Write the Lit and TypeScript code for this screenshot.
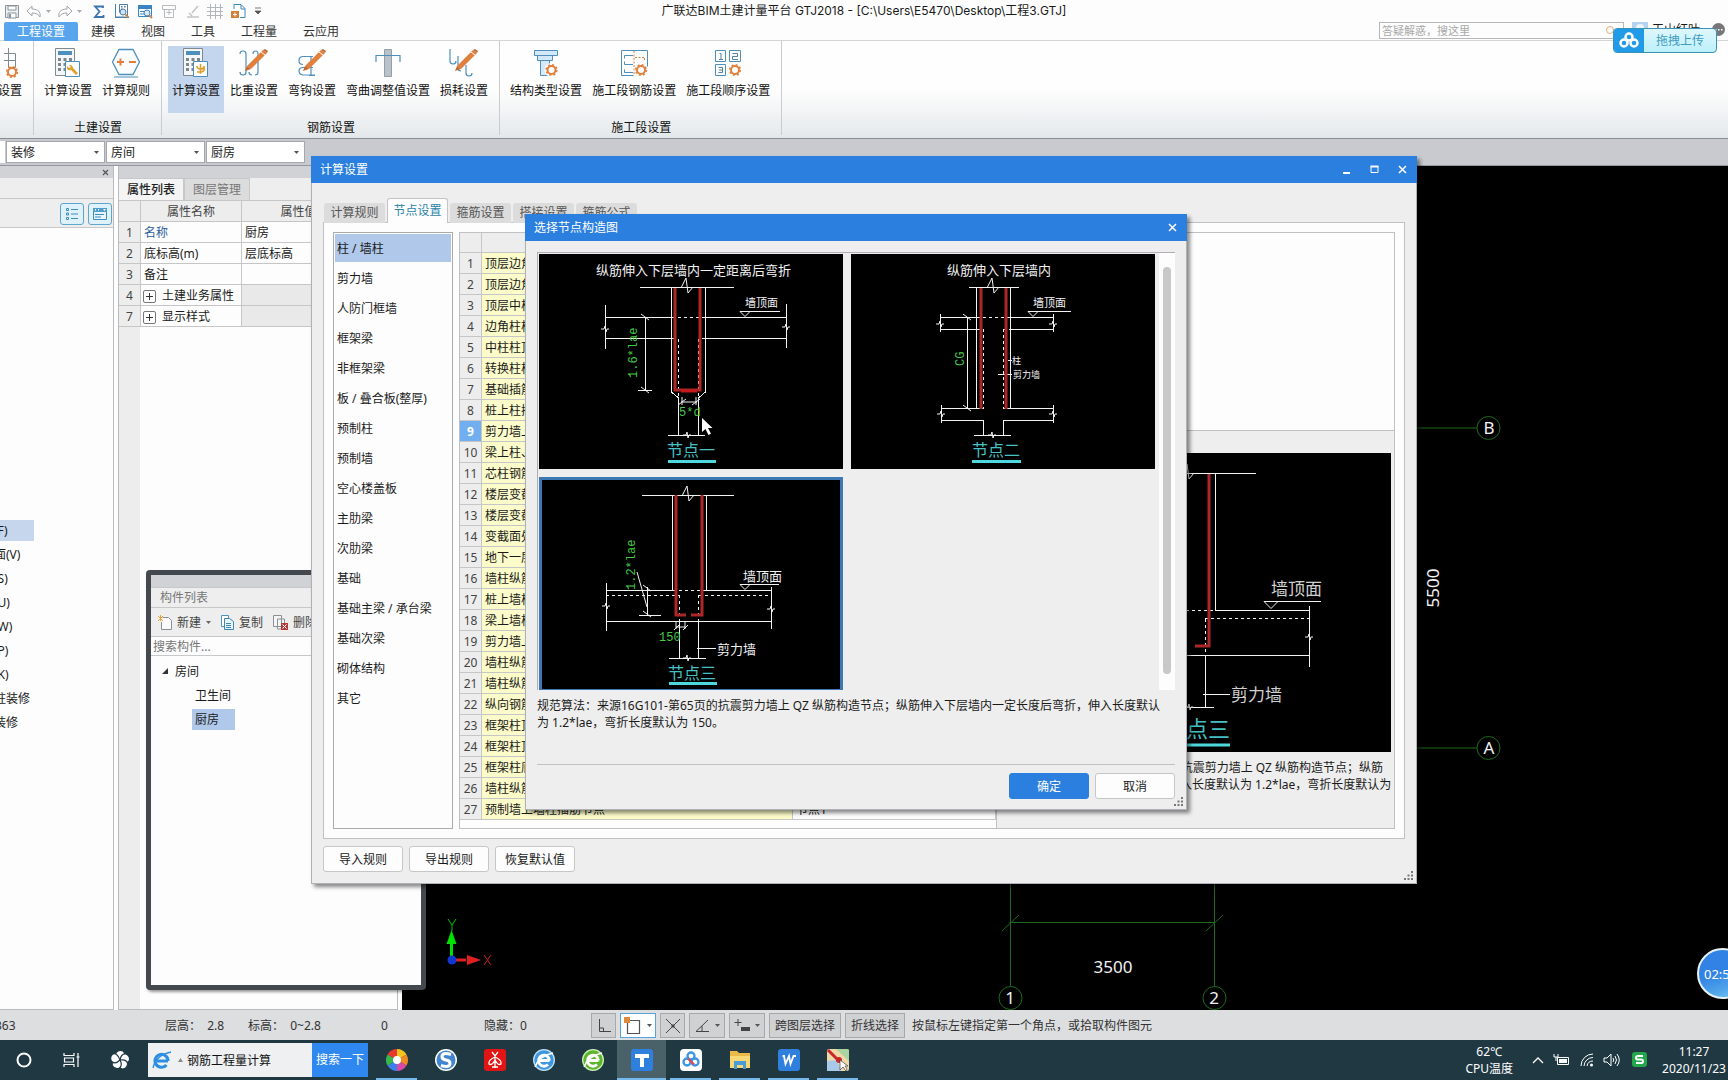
import { LitElement, html, svg, css, TemplateResult, SVGTemplateResult } from "lit";
import { customElement, state } from "lit/decorators.js";
import { classMap } from "lit/directives/class-map.js";

type Icon = SVGTemplateResult;

const BLUE = "#4f8fbb";
const ORANGE = "#e0803c";

/** Wraps icon shapes in an svg of the given size. */
const icon = (w: number, h: number, body: Icon) =>
  html`<svg class="icon" width=${w} height=${h} viewBox="0 0 ${w} ${h}" aria-hidden="true">${body}</svg>`;

const arrowGrey = () => icon(5, 3, svg`<path d="M0 0h5L2.5 3z" fill="#aaa"/>`);

const gear = (x: number, y: number) => svg`<g transform="translate(${x} ${y})" fill="none" stroke=${ORANGE}>
  <circle r="4" stroke-width="2"/>
  <circle r="5.3" stroke-width="1.6" stroke-dasharray="2 2.16"/></g>`;

const pencil = svg`<path d="M8 18 24 2l4 3L12 21z" fill=${ORANGE}/><path d="M8 18l4 3-6 2z" fill="#c8692c"/><path d="M24 2l2-1 3 2-1 2z" fill="#b5703f"/><path d="M22 4l4 3" stroke="#fff"/>`;

const calculator = svg`
  <path d="M.5.5h19v27H.5z" fill="#f4f6f7" stroke="#7f8a90"/>
  <path d="M3 3h14v4H3z" fill=${BLUE}/>
  <path d="M3 10h3v3H3zM8.500 10h3v3h-3zM14 10h3v3h-3zM3 15h3v3H3zM8.500 15h3v3h-3zM3 20h3v3H3zM8.500 20h3v3h-3z" fill="#7c878e"/>
  <path d="M10.500 13.500h14v15h-14z" fill="#fff" stroke=${BLUE}/>`;

const icons: Record<string, () => TemplateResult> = {
  storey: () => icon(15, 30, svg`<g fill="none" stroke="#7f8a90"><path d="M0 5.500h11.500v14H4M0 12.500h11M4.500 0v20"/></g>${gear(8, 24)}`),
  calcTool: () => icon(26, 30, svg`${calculator}<path d="M14 17a3 3 0 0 1 4 3l5 5-2 2-5-5a3 3 0 0 1-4-4l2 2 2-1z" fill="#e0a030"/>`),
  calcRule: () => icon(30, 30, svg`<path d="M8 1.500h14L28.500 14 22 26.500H8L1.500 14z" fill="#fbfdff" stroke=${BLUE} stroke-width="1.300"/><path d="M6 14h7M9.500 10.500v7M18 14h7" stroke=${ORANGE} stroke-width="2"/><path d="M3 29h24" stroke=${BLUE}/>`),
  calcBend: () => icon(26, 30, svg`${calculator}<path d="M17.500 16v10M14 18q0 3 3.500 3t4-3M14 24h3.500q4 0 4-4" fill="none" stroke="#e0a030" stroke-width="1.600"/>`),
  weight: () => icon(30, 30, svg`<path d="M1 6q0-3 3-3t3 3v18q0 3-3 3M14 6q0-3 3-3 2 0 2 3v18q0 3-3 3M1 24q0 3 3 3M10 24q0 3 3 3" fill="none" stroke=${BLUE} stroke-width="1.200"/>${pencil}`),
  hook: () => icon(30, 30, svg`<path d="M16 8.500H6q-4 0-4 4t4 4M16 19.500H6q-4 0-4 3.500t4 4h12M14 8v19M12 27.500h6" fill="none" stroke=${BLUE} stroke-width="1.200"/>${pencil}`),
  bend: () => icon(26, 30, svg`<path d="M9.500 1.500h7v27h-7z" fill="#b9c2c9" stroke="#94a0a8"/><path d="M1 14V7.500h24V14" fill="none" stroke=${BLUE} stroke-width="1.200"/>`),
  loss: () => icon(30, 30, svg`<path d="M1 1v12q0 3 3 3t3-3M9 8v12q0 3 3 3M17 17v8q0 3 3 3t3-3" fill="none" stroke=${BLUE} stroke-width="1.200"/>${pencil}`),
  structure: () => icon(26, 30, svg`<g fill="#d5e8f8" stroke=${BLUE}><path d="M7.500 12.500h9v15h-9z"/><path d="M4.500 7.500h15v5h-15z"/><path d="M1.500 2.500h23v5h-23z"/></g><circle cx="18.500" cy="22" r="7" fill="#fff"/>${gear(18.5, 22)}`),
  stageBar: () => icon(28, 30, svg`<g fill="none" stroke=${BLUE}><path d="M1.500 2.500h26v16M1.500 2.500v25h12M13 7.500H4.500v3M13 16.500H4.500v-3M13 24.500H4.500v-3"/></g><path d="M14 3v24M15 9.500h9M24.500 10v3" stroke=${ORANGE} stroke-dasharray="2 1.500" fill="none"/>${gear(21, 22)}`),
  stageOrder: () => icon(28, 30, svg`<g fill="#fafdff" stroke=${BLUE}><path d="M1.500 2.500h10v11h-10zM15.500 2.500h11v11h-11zM1.500 16.500h10v11h-10z"/></g><g fill="none" stroke="#5a7f9a"><path d="M5.500 5.500h1.500v5.500M5 11.500h4M18.500 5.500h5v3h-5v3h5.500M4.500 19.500h4v5h-4M5 22h3"/></g>${gear(21, 22)}`),
};

const quick: { name: string; w: number; gap: number; body: Icon; arrow?: boolean }[] = [
  { name: "保存", w: 16, gap: 4, body: svg`<path d="M1.500 2.500h13v12h-13z" fill="#eceff1" stroke="#8b959c"/><path d="M4 3h8v4H4zM4 10h8v5H4z" fill="#fff" stroke="#8b959c"/><path d="M6 11v4" stroke="#8b959c" stroke-width="2"/>` },
  { name: "撤销", w: 16, gap: 6, arrow: true, body: svg`<path d="M1 8l5-5v3c6 0 9 3 8 8-2-3-4-4-8-4v3z" fill="#fbfbfb" stroke="#a3a8ac"/>` },
  { name: "恢复", w: 16, gap: 6, arrow: true, body: svg`<path d="M15 8l-5-5v3c-6 0-9 3-8 8 2-3 4-4 8-4v3z" fill="#fbfbfb" stroke="#a3a8ac"/>` },
  { name: "汇总", w: 12, gap: 11, body: svg`<path d="M10 5V3.500H2L6.500 8.500 2 14h8.500v-2" fill="none" stroke="#3b74ae" stroke-width="1.800"/>` },
  { name: "查看计算式", w: 16, gap: 9, body: svg`<path d="M6.500 9.500h-1v-8h8v12M1.500 1v13h10M1 14.500h14" fill="none" stroke="#4f7fa8"/><path d="M7 3h1.500v1.500H7zM10 3h1.500v1.500H10zM7 5.500h1.500V7H7z" fill="#4f7fa8"/><circle cx="9" cy="9" r="3" fill="#cfe0f0" stroke="#4f7fa8"/><path d="M11.500 11.500l3 3" stroke="#c98a50" stroke-width="2"/>` },
  { name: "查看工程量", w: 16, gap: 7, body: svg`<path d="M1.500 2.500h13v11h-13z" fill="#fff" stroke="#3b84c4"/><path d="M1 2h14v4H1z" fill="#3b84c4"/><path d="M3 8.500h4M3 11h4" stroke="#3b84c4"/><circle cx="10" cy="10" r="3" fill="#dbe9f5" stroke="#3b84c4"/><path d="M12 12l3 3" stroke="#c98a50" stroke-width="2"/>` },
  { name: "报表", w: 16, gap: 8, body: svg`<g fill="none" stroke="#b8bcbf"><path d="M1.500 2.500h13v4h-13zM3.500 6.500v8h9v-8M5.500 9.500h5M8 7v5"/></g>` },
  { name: "修改", w: 14, gap: 9, body: svg`<path d="M12 3L6 10M1 14h12M3 10l3 3" stroke="#c2c5c8" stroke-width="1.500" fill="none"/>` },
  { name: "轴网", w: 16, gap: 7, body: svg`<path d="M0 4.500h16M0 8.500h16M0 12.500h16M3.500 1v15M8.500 1v15M13.500 1v15" stroke="#b3b6b9"/>` },
  { name: "导入", w: 16, gap: 8, body: svg`<path d="M3 6V1.500h7l4 4v9H9" fill="#fff" stroke="#3f87b5"/><path d="M10 2v4h4" fill="none" stroke="#3f87b5"/><path d="M0 8h8v7H0z" fill="#d08238"/><path d="M4 9.500v4M2 11.500h4" stroke="#fff"/>` },
];

const ribbonTabs = ["工程设置", "建模", "视图", "工具", "工程量", "云应用"];

const ribbonGroups = [
  { title: "", items: [["设置", "storey"]] },
  { title: "土建设置", items: [["计算设置", "calcTool"], ["计算规则", "calcRule"]] },
  { title: "钢筋设置", items: [["计算设置", "calcBend"], ["比重设置", "weight"], ["弯钩设置", "hook"], ["弯曲调整值设置", "bend"], ["损耗设置", "loss"]] },
  { title: "施工段设置", items: [["结构类型设置", "structure"], ["施工段钢筋设置", "stageBar"], ["施工段顺序设置", "stageOrder"]] },
];

const navItems = ["(F)", "面(V)", "(S)", "(U)", "(W)", "(P)", "(K)", "柱装修", "装修"];

const categories = ["柱 / 墙柱", "剪力墙", "人防门框墙", "框架梁", "非框架梁", "板 / 叠合板(整厚)", "预制柱", "预制墙", "空心楼盖板", "主肋梁", "次肋梁", "基础", "基础主梁 / 承台梁", "基础次梁", "砌体结构", "其它"];

const nodeRows = ["顶层边角", "顶层边角", "顶层中柱", "边角柱柱", "中柱柱顶", "转换柱柱", "基础插筋", "桩上柱插", "剪力墙上", "梁上柱、", "芯柱钢筋", "楼层变截", "楼层变截", "变截面处", "地下一层", "墙柱纵筋", "桩上墙柱", "梁上墙柱", "剪力墙上", "墙柱纵筋", "墙柱纵筋", "纵向钢筋", "框架柱顶", "框架柱顶", "框架柱底", "墙柱纵筋", "预制墙上墙柱插筋节点"];

const ruleText = "规范算法：来源16G101-第65页的抗震剪力墙上 QZ 纵筋构造节点；纵筋伸入下层墙内一定长度后弯折，伸入长度默认为 1.2*lae，弯折长度默认为 150。";

/** Break mark on a vertical edge of a slab. */
const tick = (x: number, y: number) => svg`<path d="M${x - 4} ${y}h3l1-3 1 6 1-3h2" class="thin"/>`;
/** Zigzag break on the horizontal cut line of a column. */
const zig = (x: number, y: number) => svg`<path d="M${x - 6} ${y + 1}L${x - 1} ${y - 9}L${x + 1} ${y + 6}L${x + 6} ${y}" class="thin"/>`;
const level = (x: number, y: number, w: number, s: number) => svg`<path d="M${x} ${y}h${w}M${x} ${y}l${s} ${s}l${s} ${-s}" class="thin"/>`;
const slash = (x: number, y: number) => svg`<path d="M${x - 4} ${y - 3}l8 6" class="thin"/>`;

const nodeOne = svg`
  <text x="57" y="21" class="t13">纵筋伸入下层墙内一定距离后弯折</text>
  <path class="w" d="M101 33.500H195M132.500 34V138L139.500 144V182M166.500 34V138L159.500 144V182M67 63.500H132M167 63.500H247M67 84.500H136M163 84.500H247M66.500 51V95M247.500 50V94M129 181.500H166M106.500 63V137M99 136.500H113"/>
  <path class="w d" d="M133 63.500H166M139.500 85V144M159.500 85V144"/>
  <path class="r" d="M136 34V136H161V34"/><path d="M142 137H158" stroke="#c41a1a" stroke-width="3"/>
  ${zig(148, 33)}${tick(66, 75)}${tick(247, 73)}${tick(148, 181)}${slash(106, 63)}${slash(106, 136)}
  ${level(201, 57.5, 40, 5)}
  <path class="thin" d="M142 148H158M143 143V151M157 143V151M139 151l8-6M153 151l8-6"/>
  <text x="206" y="53" class="t11">墙顶面</text>
  <text transform="translate(98 124) rotate(-90)" class="g">1.6*lae</text>
  <text x="140" y="162" class="g">5*d</text>
  <text x="128" y="202" class="cy">节点一</text><path d="M129 207.500h48" class="u"/>`;

const nodeTwo = svg`
  <text x="96" y="21" class="t13">纵筋伸入下层墙内</text>
  <path class="w" d="M118 33.500H168M125.500 34V155M159.500 34V155M89 63.500H125M160 63.500H203M89 75.500H125M160 75.500H203M89.500 60V78M202.500 60V78M116.500 63V155M90 154.500H133M152 154.500H203M90 166.500H133M152 166.500H203M90.500 151V169M202.500 151V169M132.500 166V182M152.500 166V182M123 181.500H160M157 106.500H161M147 120.500H161"/>
  <path class="w d" d="M126 63.500H160M126 75.500H133M152 75.500H160M132.500 75V155M152.500 75V155"/>
  <path class="r" d="M130 34V155M155 34V155"/>
  ${zig(142, 33)}${tick(89, 70)}${tick(202, 70)}${tick(90, 160)}${tick(202, 160)}${tick(141, 181)}${slash(116, 63)}${slash(116, 154)}
  ${level(177, 57.5, 43, 5)}
  <text x="182" y="53" class="t11">墙顶面</text>
  <text x="161" y="110" class="t9">柱</text><text x="162" y="124" class="t9">剪力墙</text>
  <text transform="translate(113 112) rotate(-90)" class="g">CG</text>
  <text x="121" y="202" class="cy">节点二</text><path d="M121 207.500h49" class="u"/>`;

const nodeThree = svg`
  <path class="w" d="M103 18.500H195M133.500 18V113M167.500 18V113M67 113.500H134M167 113.500H232M67 144.500H232M67.500 106V154M232.500 110V152M108.500 110V138M100 138.500H122M140.500 144V182M159.500 144V182M130 181.500H167M158 171.500H177"/>
  <path class="thin" d="M98 95L108 130M137 144V152M146 144V152M137 150H146M135 153l5-5M144 153l5-5"/>
  <path class="w d" d="M134 113.500H167M67 118.500H140M160 118.500H232M140.500 118V144M159.500 118V144"/>
  <path class="r" d="M137 18V138H147M163 18V138H152"/>
  ${zig(149, 18)}${tick(67, 129)}${tick(232, 132)}${tick(148, 181)}${slash(108, 111)}${slash(108, 137)}
  ${level(201, 107.5, 39, 5)}
  <text x="204" y="104" class="t13">墙顶面</text><text x="178" y="177" class="t13">剪力墙</text>
  <text transform="translate(96 113) rotate(-90)" class="g">1.2*lae</text>
  <text x="120" y="164" class="g">150</text>
  <text x="129" y="202" class="cy">节点三</text><path d="M130 206.500h48" class="u"/>`;

const nodeLarge = svg`
  <path class="w" d="M100 20.500H256M215.500 21V157M215 157.500H309M60 202.500H309M309.500 153V214M205.500 203V254M203 241.500H230M150 254.500H214"/>
  <path class="w d" d="M150 157.500H215M205 165.500H309M205.500 166V203"/>
  <path class="r" d="M209 21V193H195"/>
  ${zig(188, 20)}${tick(309, 184)}${tick(189, 254)}${level(264, 148.5, 57, 7)}
  <text x="271" y="142" class="s18">墙顶面</text><text x="231" y="248" class="s18">剪力墙</text>
  <text x="164" y="284" class="s22">节点三</text><path d="M164 292h66" stroke="#4fd8dc" stroke-width="3"/>`;

const thumbs = [
  { name: "节点一", art: nodeOne },
  { name: "节点二", art: nodeTwo },
  { name: "节点三", art: nodeThree },
];

const grip = () => icon(10, 10, svg`<path d="M7 0h2v2H7zM3.500 3.500h2v2h-2zM7 3.500h2v2H7zM0 7h2v2H0zM3.500 7h2v2h-2zM7 7h2v2H7z" fill="#777"/>`);
const cross = (c: string) => icon(9, 9, svg`<path d="M1 1l7 7M8 1L1 8" stroke=${c} stroke-width="1.500"/>`);

const ie = (a: string, b: string) => svg`<circle cx="12" cy="12" r="11" fill=${b}/><circle cx="12" cy="12" r="9.700" fill=${a}/><path d="M17.500 12.500H7M17.500 12.500a5.500 5.500 0 1 0-1.500 4" fill="none" stroke="#fff" stroke-width="2.800"/><path d="M3 19Q7 8 21 5" fill="none" stroke="#fff" stroke-width="1.300"/>`;

const apps: { name: string; cls: string; body: Icon }[] = [
  { name: "浏览器", cls: "run", body: svg`<path d="M12 12L12 1a11 11 0 0 1 9.500 5.500z" fill="#f5c31d"/><path d="M12 12l9.500-5.500a11 11 0 0 1 0 11z" fill="#f08a24"/><path d="M12 12l9.500 5.500A11 11 0 0 1 12 23z" fill="#d84aa8"/><path d="M12 12v11a11 11 0 0 1-9.500-5.500z" fill="#3d7fe8"/><path d="M12 12L2.500 17.500a11 11 0 0 1 0-11z" fill="#38b84c"/><path d="M12 12L2.500 6.500A11 11 0 0 1 12 1z" fill="#e8382f"/><circle cx="12" cy="12" r="4" fill="#fff"/>` },
  { name: "搜狗浏览器", cls: "", body: svg`<circle cx="12" cy="12" r="11" fill="#fff"/><circle cx="12" cy="12" r="9.500" fill="#4385d0"/><path d="M17 6.500Q8 4 8 8.500q0 3 4 3.500t4 3.500q0 4.500-9 2" fill="none" stroke="#fff" stroke-width="3"/>` },
  { name: "广联达", cls: "", body: svg`<rect x="1" y="1" width="22" height="22" rx="3" fill="#e01514"/><path d="M12 7v13M12 9Q5 12 6 16q3 2 6-4 3 6 6 4 1-4-6-7M9 4l3 4 3-4M9 19h6" fill="none" stroke="#fff" stroke-width="1.300"/>` },
  { name: "Internet Explorer", cls: "", body: ie("#3d97e0", "#bfe0f7") },
  { name: "360浏览器", cls: "", body: ie("#5cb62c", "#cdeeb5") },
  { name: "GTJ2018", cls: "run current", body: svg`<rect x="1" y="1" width="22" height="22" rx="3" fill="#2f80dd"/><path d="M5 6h14v4H14v9h-4v-9H5z" fill="#fff"/>` },
  { name: "百度网盘", cls: "run", body: svg`<rect x="1" y="1" width="22" height="22" rx="4" fill="#fff"/><g fill="none" stroke-width="2.300"><circle cx="12" cy="8" r="3.500" stroke="#3a96e8"/><circle cx="8" cy="14" r="3.500" stroke="#3a96e8"/><circle cx="16" cy="14" r="3.500" stroke="#3a96e8"/><path d="M9 10.500l6 6" stroke="#e04a55"/></g>` },
  { name: "文件资源管理器", cls: "run", body: svg`<path d="M2 3h7l2 2h11v15H2z" fill="#e9b949"/><path d="M2 8h20v12H2z" fill="#f8d775"/><path d="M6 13h12v8h-3v-4H9v4H6z" fill="#4b9bd4"/>` },
  { name: "WPS", cls: "run", body: svg`<rect x="1" y="1" width="22" height="22" rx="3" fill="#2f80dd"/><path d="M5.500 8H7l1.500 8L12 8l1.500 8 3-8H19" fill="none" stroke="#fff" stroke-width="1.800"/>` },
  { name: "看图", cls: "run", body: svg`<rect x="1" y="1" width="22" height="22" rx="2" fill="#f0d8a8"/><path d="M10 1h11a2 2 0 0 1 2 2v10z" fill="#a8d4a0"/><path d="M1 13l10-1 4 11H1z" fill="#a9c9ea"/><path d="M2 2l11 11" stroke="#c82828" stroke-width="3"/><circle cx="13" cy="12" r="3" fill="#c82828"/><path d="M14 12v10l3-3 3 4 1-2-2-3h3z" fill="#fff" stroke="#444" stroke-width=".7"/>` },
];

@customElement("app-root")
export class AppRoot extends LitElement {
  @state() private category = 0;
  @state() private thumb = 2;

  static styles = css`
    :host { display: flex; flex-direction: column; position: relative; min-height: 100vh; overflow: hidden; font: 12px/16px "Noto Sans", "Noto Sans CJK SC", sans-serif; color: #1a1a1a; background: #fdfdfd; }
    * { box-sizing: border-box; }
    button, input, select { font: inherit; color: inherit; margin: 0; padding: 0; border: 0; background: none; border-radius: 0; }
    button { display: inline-flex; align-items: center; justify-content: center; white-space: nowrap; }
    select { appearance: none; }
    .icon { display: block; flex: none; }
    .grow { flex: 1; }
    ul { list-style: none; margin: 0; padding: 0; }

    .quick { display: grid; grid-template-columns: 1fr auto 1fr; height: 22px; align-items: center; }
    .quick-tools { display: flex; align-items: center; }
    .quick-tools button { gap: 4px; }
    .title { font: 400 12px/16px Inter, "Noto Sans CJK SC", sans-serif; margin: 0; }
    .tabs { display: flex; height: 19px; padding-left: 4px; border-bottom: 1px solid #d3d5d7; }
    .tab { padding: 0 13px; height: 19px; color: #333; }
    .tab.on { background: #58a5ee; color: #fff; border-radius: 2px 2px 0 0; }
    .ask { display: flex; width: 245px; height: 17px; border: 1px solid #b5b7b9; align-items: center; padding-right: 6px; }
    .ask input { flex: 1; min-width: 0; padding: 0 2px; font-size: 11px; outline: 0; }
    .ask input::placeholder { color: #a8a8a8; opacity: 1; }
    .user { display: flex; gap: 4px; margin-left: 8px; align-items: flex-start; }
    .more { margin: 1px 3px 0 12px; }

    .ribbon { display: flex; height: 98px; border-bottom: 1px solid #8a8e91; background: linear-gradient(#fefefe 50%, #e3e8ea); padding-bottom: 3px; }
    .group { display: flex; flex-direction: column; align-items: center; padding: 5px 7px 0 6px; border-right: 1px solid #c9cdd0; }
    .group.cut { width: 34px; align-items: flex-start; padding-left: 0; }
    .group.cut .big { align-items: flex-start; margin-left: -6px; }
    .group.cut .icon { margin-left: 6px; }
    .group-row { display: flex; gap: 2px; flex: 1; }
    .big { flex-direction: column; justify-content: flex-start; gap: 5px; height: 67px; padding: 2px 4px; color: #111; }
    .big.on { background: #c4d5ee; }
    .group-title { line-height: 15px; padding-left: 2px; color: #111; }

    .filters { display: flex; height: 27px; padding: 2px 0; background: #c8cacf; border-bottom: 1px solid #94979b; gap: 1px; }
    .stub { width: 5px; background: #fff; }
    .pick { display: flex; align-items: center; width: 99px; height: 22px; background: #fff; border: 1px solid #a4a7ab; position: relative; }
    .pick select { flex: 1; height: 20px; padding: 1px 3px 0 4px; }
    .pick .icon { position: absolute; right: 5px; pointer-events: none; }

    .work { display: flex; flex: 1; position: relative; min-height: 0; }
    .nav { width: 114px; border-right: 1px solid #b9bbbe; border-bottom: 1px solid #b9bbbe; overflow: hidden; }
    .strip { display: flex; justify-content: flex-end; align-items: center; height: 12px; background: #d0d2d6; padding-right: 4px; }
    .nav-head { height: 21px; background: #eee; border-bottom: 1px solid #c6c8ca; }
    .nav-tools { display: flex; justify-content: flex-end; gap: 4px; height: 29px; padding: 4px 1px 0 0; background: #eee; border-bottom: 1px solid #c6c8ca; }
    .nav-tools button { width: 24px; height: 22px; border: 1px solid #5fa6cc; border-radius: 3px; background: #dff1fa; }
    .nav-list { padding-top: 290px; }
    .nav-list li { display: flex; height: 24px; align-items: center; margin-left: -6px; }
    .nav-list a { color: inherit; text-decoration: none; height: 21px; line-height: 21px; }
    .nav-list .on { background: #c6d6ec; width: 40px; }

    .props { width: 280px; margin: 0 4px; border: 1px solid #b9bbbe; border-top: 0; background: linear-gradient(90deg, #ededed 21px, #fdfdfd 21px); }
    .props-tabs { display: flex; height: 22px; background: #eee; }
    .props-tabs button { padding: 1px 8px 0; color: #777; background: #dcdcdc; border: 1px solid #c6c8ca; border-bottom: 0; }
    .props-tabs .on { color: #222; background: #f4f4f4; font-weight: 500; border-left: 0; }
    table { border-collapse: separate; border-spacing: 0; table-layout: fixed; }
    th, td { height: 21px; padding: 2px 3px 0; border-right: 1px solid #c6c6c6; border-bottom: 1px solid #c6c6c6; font-weight: 400; text-align: left; white-space: nowrap; overflow: hidden; line-height: 16px; }
    th { background: #ededed; text-align: center; color: #444; }
    .ptable { width: 278px; border-top: 1px solid #c6c6c6; }
    .ptable td { background: #fdfdfd; }
    .ptable .void { background: #e9e9e9; }
    .ptable .key { color: #2c5f9e; }
    .ptable .c0 { width: 22px; }
    .ptable .c1 { width: 101px; }
    .ptable .c2 { width: 114px; }
    .fold { display: flex; align-items: center; gap: 6px; margin-left: -1px; }
    .plus { width: 13px; height: 13px; border: 1px solid #777; border-radius: 2px; background: #fff; }

    .canvas { flex: 1; background: #000; position: relative; overflow: hidden; }
    .canvas svg { display: block; position: absolute; inset: 0; width: 100%; height: 100%; }
    .timer { position: absolute; right: -20px; bottom: 11px; width: 51px; height: 51px; border: 2px solid #e8f2fa; border-radius: 50%; background: linear-gradient(160deg, #3182e4 45%, #4fa4ea 75%, #7ccdf0); color: #fff; justify-content: flex-start; padding-left: 5px; font-size: 13px; }

    .float { position: absolute; left: 146px; top: 404px; width: 280px; height: 420px; border: 5px solid #43494f; border-radius: 4px; background: #fdfdfd; box-shadow: 2px 2px 3px #0006; }
    .float-title { height: 21px; padding: 2px 9px; background: #eee; border: solid #c6c8ca; border-width: 1px 0; color: #777; }
    .float-tools { display: flex; align-items: center; height: 29px; padding: 1px 0 0 7px; background: #eee; border-bottom: 1px solid #c6c8ca; gap: 10px; color: #444; }
    .float-tools button { gap: 5px; }
    .find { display: block; width: 100%; height: 19px; padding: 0 2px; border-bottom: 1px solid #c6c8ca; }
    .find::placeholder { color: #777; opacity: 1; }
    .tree { padding-top: 3px; }
    .tree li { display: flex; align-items: center; height: 24px; }
    .tree .lv1 { padding-left: 11px; gap: 7px; }
    .tree .lv2 { padding-left: 41px; }
    .tree span { padding: 0 3px; line-height: 21px; }
    .tree .lv1 span { padding: 0; }
    .tree .on span { background: #b0c9ea; padding-right: 16px; }

    .dialog { position: absolute; display: flex; flex-direction: column; background: #eee; border: 1px solid #aeb2b6; border-top: 0; box-shadow: 3px 3px 4px #0007; }
    .bar { display: flex; align-items: center; height: 27px; padding: 0 10px 0 9px; margin: 0 -1px; background: #2b7fdf; color: #fff; }
    .bar h2 { flex: 1; font-size: 12px; font-weight: 400; margin: 0; }
    .bar-buttons { display: flex; gap: 19px; }
    .grip { position: absolute; right: 2px; bottom: 2px; }
    .btn { width: 80px; height: 26px; padding-top: 1px; border: 1px solid #c6c6c6; border-radius: 3px; background: #fdfdfd; }
    .btn.main { background: #2b7fdf; border-color: #2b7fdf; color: #fff; }

    .calc { left: 311px; top: 156px; width: 1106px; height: 728px; }
    .calc-tabs { display: flex; gap: 2px; align-items: flex-end; height: 40px; padding: 15px 0 0 12px; margin-bottom: -1px; position: relative; }
    .calc-tabs button { width: 61px; height: 20px; background: #dcdcdc; color: #555; border-radius: 3px 3px 0 0; }
    .calc-tabs .on { height: 25px; background: #fdfdfd; border: 1px solid #c2c4c6; border-bottom: 0; color: #2a84a8; }
    .calc-panel { flex: 1; display: flex; margin: 0 11px; padding: 9px; background: #fdfdfd; border: 1px solid #bfc1c3; min-height: 0; }
    .cats { width: 120px; padding: 1px; border: 1px solid #a9abad; }
    .cats button { display: flex; justify-content: flex-start; width: 100%; height: 28px; margin-bottom: 2px; padding: 2px 2px 0; }
    .cats .on { background: #b0c9ea; }
    .nodes { width: 538px; margin-left: 6px; border: 1px solid #bfc1c3; overflow: hidden; }
    .ntable { width: 536px; }
    .ntable th:first-child { width: 22px; padding: 2px 0 0; }
    .ntable .name { width: 311px; }
    .ntable thead th { height: 20px; }
    .ntable td.name { background: #fcfcca; }
    .ntable th.on { background: #70aeef; color: #fff; font-weight: 700; }
    .detail { flex: 1; min-width: 0; border: 1px solid #bfc1c3; border-left: 0; background: #eee; }
    .detail-top { height: 198px; background: #fdfdfd; border-bottom: 1px solid #bfc1c3; }
    .detail-art { display: block; width: 391px; height: 299px; margin: 22px 4px 7px 3px; background: #000; }
    .detail p { margin: 0 0 0 3px; line-height: 17px; }
    .calc-foot { display: flex; gap: 6px; height: 44px; padding: 7px 11px; }

    .choose { left: 525px; top: 214px; width: 662px; height: 596px; }
    .choose-body { flex: 1; padding: 11px 11px 0 11px; display: flex; flex-direction: column; }
    .gallery { display: flex; height: 438px; border: solid #b5adb5; border-width: 1px 0 0 1px; overflow: hidden; }
    .grid { flex: 1; display: grid; grid-template-columns: 304px 304px; grid-auto-rows: 215px; gap: 8px; padding: 1px; height: 438px; }
    .grid button { background: #000; }
    .grid button.on { outline: 3px solid #3c78b4; outline-offset: -3px; }
    .grid svg { display: block; width: 304px; height: 215px; }
    .track { width: 16px; background: #fdfdfd; padding: 14px 4px 16px; }
    .thumb { height: 100%; border-radius: 4px; background: #c8c8c8; }
    .rule { margin: 7px 0 0; line-height: 17px; height: 68px; border-bottom: 1px solid #c2c2c2; padding-right: 4px; }
    .choose-foot { display: flex; justify-content: flex-end; gap: 6px; padding-top: 8px; height: 44px; }
    .pointer { position: absolute; left: 175px; top: 203px; pointer-events: none; }

    .w { stroke: #f2f2f2; fill: none; shape-rendering: crispEdges; }
    .d { stroke-dasharray: 3 3; }
    .thin { stroke: #f2f2f2; fill: none; }
    .r { stroke: #ac2828; stroke-width: 3; fill: none; }
    svg text { fill: #f2f2f2; }
    .t13 { font-size: 13px; }
    .t11 { font-size: 11px; }
    .t9 { font-size: 9px; }
    svg .s18 { font-size: 17px; fill: #d0d0d0; }
    svg .s22 { font-size: 22px; fill: #45bfc2; }
    svg .g { font: 12px "Liberation Mono", monospace; fill: #45c845; }
    svg .cy { font-size: 16px; fill: #48c0c4; }
    .u { stroke: #4fd8dc; stroke-width: 3; }
    .axis { stroke: #1f6a1f; fill: none; }
    .ax { font-size: 17px; text-anchor: middle; }

    .status { display: flex; align-items: center; height: 30px; padding: 2px 0 1px; background: #dddee0; color: #333; }
    .status .f { white-space: pre; }
    .f1 { width: 171px; margin-left: -6px; padding-left: 1px; }
    .f2 { width: 83px; }
    .f3 { width: 133px; }
    .f4 { width: 103px; }
    .f5 { width: 107px; }
    .snap { display: flex; gap: 4px; padding-right: 7px; }
    .snap button { height: 25px; min-width: 24px; border: 1px solid #a6a8aa; background: #d0d1d3; gap: 5px; padding: 0 5px; }
    .snap .ico { width: 25px; padding: 0; }
    .snap .wide { width: 36px; padding: 0; }
    .snap .on { background: #fff; border-color: #54a4e0; }

    .task { display: flex; height: 40px; background: #1f3842; color: #fff; }
    .sys { display: flex; width: 148px; }
    .sys button { width: 48px; height: 40px; }
    .seek { display: flex; width: 220px; margin: 3px 4px 3px 0; background: #eef0f1; color: #111; align-items: center; gap: 4px; padding-left: 2px; }
    .seek input { flex: 1; min-width: 0; height: 34px; }
    .seek button { width: 56px; height: 34px; background: #2f88f0; color: #fff; }
    .apps { display: flex; }
    .apps button { width: 41px; height: 40px; margin: 0 4px; border: solid transparent; border-width: 2px 0; }
    .apps .run { border-bottom-color: #76b9ed; }
    .apps .current { width: 49px; margin: 0; background: #4b616a; border-top-color: #4b616a; }
    .temp, .clock { display: flex; flex-direction: column; justify-content: center; align-items: center; line-height: 17px; white-space: nowrap; }
    .tray { display: flex; align-items: center; gap: 9px; padding: 0 11px 0 19px; }
    .clock { width: 68px; }

    .upload { position: absolute; right: 11px; top: 28px; width: 104px; height: 25px; border: 1px solid #3a93b6; border-radius: 4px; background: linear-gradient(#dff7fc, #bdf0fb); color: #3f9bc0; overflow: hidden; justify-content: flex-start; }
    .upload .mark { display: flex; align-items: center; justify-content: center; width: 30px; height: 25px; background: #219be8; }
    .upload .lab { flex: 1; text-align: center; }
  `;

  private renderTop() {
    return html`
      <header class="quick">
        <div class="quick-tools">
          ${quick.map((q) => html`<button aria-label=${q.name} style="margin-left:${q.gap}px">${icon(q.w, 16, q.body)}${q.arrow ? arrowGrey() : ""}</button>`)}
          <button aria-label="更多" style="margin-left:8px">${icon(6, 8, svg`<path d="M0 1h6M0 4h6L3 7z" stroke="#555" stroke-width=".8" fill="#555"/>`)}</button>
        </div>
        <h1 class="title">广联达BIM土建计量平台 GTJ2018 - [C:\\Users\\E5470\\Desktop\\工程3.GTJ]</h1>
        <span></span>
      </header>
      <nav class="tabs">
        ${ribbonTabs.map((t, i) => html`<button class=${classMap({ tab: true, on: i === 0 })}>${t}</button>`)}
        <span class="grow"></span>
        <label class="ask"><input aria-label="搜索" placeholder="答疑解惑，搜这里" />${icon(12, 12, svg`<circle cx="5" cy="5" r="3.500" fill="none" stroke="#e0b080"/><path d="M8 8l3 3" stroke="#e0b080"/>`)}</label>
        <div class="user">${icon(16, 16, svg`<path d="M0 0h16v16H0z" fill="#b5d3ee"/><circle cx="8" cy="6" r="4" fill="#eef5fb"/>`)}<span>天山红叶</span></div>
        <div class="more">${icon(13, 13, svg`<circle cx="6.500" cy="6.500" r="6.500" fill="#777"/><path d="M3 6h1.500v1.500H3zM6 6h1.500v1.500H6zM9 6h1.500v1.500H9z" fill="#fff"/>`)}</div>
      </nav>
      <section class="ribbon">
        ${ribbonGroups.map((g, gi) => html`<div class=${classMap({ group: true, cut: gi === 0 })}>
          <div class="group-row">
            ${g.items.map(([label, ic], i) => html`<button class=${classMap({ big: true, on: gi === 2 && i === 0 })}>${icons[ic]()}<span>${label}</span></button>`)}
          </div>
          <div class="group-title">${g.title}</div>
        </div>`)}
      </section>
      <section class="filters">
        <span class="stub"></span>
        ${["装修", "房间", "厨房"].map((v) => html`<label class="pick"><select aria-label=${v}><option>${v}</option></select>${icon(5, 3, svg`<path d="M0 0h5L2.500 3z" fill="#555"/>`)}</label>`)}
      </section>`;
  }

  private renderPanels() {
    const row = (n: string, k: TemplateResult | string, v: string, c = "", voided = false) =>
      html`<tr><th scope="row">${n}</th><td class=${c}>${k}</td><td class=${voided ? "void" : ""}>${v}</td><td class=${voided ? "void" : ""}></td></tr>`;
    const fold = (t: string) => html`<div class="fold"><button class="plus" aria-label="展开">${icon(7, 7, svg`<path d="M0 3.500h7M3.500 0v7" stroke="#333"/>`)}</button>${t}</div>`;
    return html`
      <aside class="nav">
        <div class="strip"><button aria-label="关闭">${icon(7, 7, svg`<path d="M1 1l5 5M6 1L1 6" stroke="#555" stroke-width="1.200"/>`)}</button></div>
        <div class="nav-head"></div>
        <div class="nav-tools">
          <button aria-label="列表">${icon(14, 14, svg`<g fill="none" stroke="#3b8fc0"><path d="M1.500 1.500h2v2h-2zM1.500 6h2v2h-2zM1.500 10.500h2v2h-2zM6 2.500h7M6 7h7M6 11.500h7"/></g>`)}</button>
          <button aria-label="详情">${icon(16, 14, svg`<path d="M1.500 1.500h13v11h-13z" fill="#eaf5fb" stroke="#3b8fc0"/><path d="M1 1h14v4H1z" fill="#4f9fce"/><path d="M3 7.500h9M3 10h6" stroke="#3b8fc0"/><path d="M3 2h1v1.500H3zM6 2h1v1.500H6zM11 2h3l-1.500 2z" fill="#fff"/>`)}</button>
        </div>
        <ul class="nav-list">${navItems.map((t, i) => html`<li><a href="#nav" class=${i === 0 ? "on" : ""}>${t}</a></li>`)}</ul>
      </aside>
      <section class="props">
        <div class="strip"></div>
        <div class="props-tabs"><button class="on">属性列表</button><button>图层管理</button></div>
        <table class="ptable">
          <thead><tr><th class="c0"></th><th class="c1">属性名称</th><th class="c2">属性值</th><th></th></tr></thead>
          <tbody>
            ${row("1", "名称", "厨房", "key")} ${row("2", "底标高(m)", "层底标高")} ${row("3", "备注", "")}
            ${row("4", fold("土建业务属性"), "", "", true)} ${row("7", fold("显示样式"), "", "", true)}
          </tbody>
        </table>
      </section>
      <section class="canvas">
        <svg role="img" aria-label="轴网">
          <path class="axis" d="M1014 262H1075M1014 582H1075M608.500 700V820M812.500 700V820M608 756.500H813M600 765l17-16M804 765l17-16"/>
          <g class="axis"><circle cx="1086.500" cy="262" r="11.500"/><circle cx="1086.500" cy="582" r="11.500"/><circle cx="608.500" cy="832" r="11.500"/><circle cx="812.500" cy="832" r="11.500"/></g>
          <text class="ax" x="1087" y="268">B</text><text class="ax" x="1087" y="588">A</text>
          <text class="ax" x="608" y="838">1</text><text class="ax" x="812" y="838">2</text>
          <text class="ax" x="711" y="807">3500</text>
          <text class="ax" transform="translate(1037 422) rotate(-90)">5500</text>
          <path d="M49.500 790v-14" stroke="#00e000" stroke-width="3"/><path d="M44.500 778h10L49.500 764z" fill="#00e000"/>
          <path d="M52 794h12" stroke="#e02020" stroke-width="3"/><path d="M65 789v10l14-5z" fill="#e02020"/>
          <circle cx="50" cy="794" r="4.500" fill="#1038d0"/>
          <path d="M46 753l4 6 4-6M50 759v6" fill="none" stroke="#00c800"/><path d="M82 789l7 10M89 789l-7 10" fill="none" stroke="#d02020"/>
        </svg>
        <button class="timer">02:5</button>
      </section>
      <section class="float" aria-label="构件列表">
        <div class="strip"></div>
        <div class="float-title">构件列表</div>
        <div class="float-tools">
          <button>${icon(14, 16, svg`<path d="M4.500 2.500h6l3 3v9h-10V7" fill="#fafafa" stroke="#8a9096"/><path d="M0 1l5 5M5 1L0 6M2.500 0v6" stroke="#e8a23c"/>`)}<span>新建</span>${icon(5, 3, svg`<path d="M0 0h5L2.500 3z" fill="#666"/>`)}</button>
          <button>${icon(13, 16, svg`<path d="M.5.500h7v11h-7z" fill="#fff" stroke="#4f94b8"/><path d="M3.500 3.500h5l4 3v8h-9z" fill="#e8f4fa" stroke="#3f87b0"/><path d="M5 8.500h5M5 10.500h5M5 12.500h5" stroke="#3f87b0"/>`)}<span>复制</span></button>
          <button>${icon(15, 16, svg`<path d="M.5.500h8v11h-8zM4.500 4h7v10h-7z" fill="#f5f5f5" stroke="#8a9096"/><path d="M8 8h7v7H8z" fill="#b23a3a"/><path d="M9.500 9.500l4 4M13.500 9.500l-4 4" stroke="#fff"/>`)}<span>删除</span></button>
        </div>
        <input class="find" aria-label="搜索构件" placeholder="搜索构件..." />
        <ul class="tree">
          <li class="lv1">${icon(6, 6, svg`<path d="M6 0v6H0z" fill="#333"/>`)}<span>房间</span></li>
          <li class="lv2"><span>卫生间</span></li>
          <li class="lv2 on"><span>厨房</span></li>
        </ul>
      </section>`;
  }

  private renderCalc() {
    return html`
      <section class="dialog calc" role="dialog" aria-label="计算设置">
        <div class="bar"><h2>计算设置</h2><div class="bar-buttons">
          <button aria-label="最小化">${icon(9, 9, svg`<path d="M1 8h7" stroke="#fff" stroke-width="2"/>`)}</button>
          <button aria-label="最大化">${icon(9, 9, svg`<path d="M1 1.500h7v6H1z" fill="none" stroke="#fff"/><path d="M.5 1.500h8" stroke="#fff" stroke-width="2"/>`)}</button>
          <button aria-label="关闭">${cross("#fff")}</button></div></div>
        <div class="calc-tabs">${["计算规则", "节点设置", "箍筋设置", "搭接设置", "箍筋公式"].map((t, i) => html`<button class=${i === 1 ? "on" : ""}>${t}</button>`)}</div>
        <div class="calc-panel">
          <div class="cats">${categories.map((c, i) => html`<button class=${classMap({ on: i === this.category })} @click=${() => (this.category = i)}>${c}</button>`)}</div>
          <div class="nodes"><table class="ntable">
            <thead><tr><th></th><th class="name"></th><th></th></tr></thead>
            <tbody>${nodeRows.map((n, i) => html`<tr><th scope="row" class=${i === 8 ? "on" : ""}>${i + 1}</th><td class="name">${n}</td><td>${i === 26 ? "节点1" : ""}</td></tr>`)}</tbody>
          </table></div>
          <div class="detail">
            <div class="detail-top"></div>
            <svg class="detail-art" viewBox="0 0 391 299" role="img" aria-label="节点三">${nodeLarge}</svg>
            <p>${ruleText}</p>
          </div>
        </div>
        <div class="calc-foot"><button class="btn">导入规则</button><button class="btn">导出规则</button><button class="btn">恢复默认值</button></div>
        <div class="grip">${grip()}</div>
      </section>`;
  }

  private renderChoose() {
    return html`
      <section class="dialog choose" role="dialog" aria-label="选择节点构造图">
        <div class="bar"><h2>选择节点构造图</h2><button aria-label="关闭">${cross("#fff")}</button></div>
        <div class="choose-body">
          <div class="gallery">
            <div class="grid">${thumbs.map((t, i) => html`<button aria-label=${t.name} class=${classMap({ on: i === this.thumb })} @click=${() => (this.thumb = i)}><svg viewBox="0 0 304 215">${t.art}</svg></button>`)}</div>
            <div class="track"><div class="thumb"></div></div>
          </div>
          <p class="rule">${ruleText}</p>
          <div class="choose-foot"><button class="btn main">确定</button><button class="btn">取消</button></div>
        </div>
        <div class="grip">${grip()}</div>
        <svg class="pointer" width="13" height="19" viewBox="0 0 13 19"><path d="M1 1v14l3.500-3 3 6 2.500-1.200-3-5.800h4.500z" fill="#fff"/></svg>
      </section>`;
  }

  private renderBottom() {
    const dd = () => icon(5, 3, svg`<path d="M0 0h5L2.500 3z" fill="#555"/>`);
    return html`
      <footer class="status">
        <span class="f f1">363</span><span class="f f2">层高：  2.8</span><span class="f f3">标高：  0~2.8</span><span class="f f4">0</span><span class="f f5">隐藏：0</span>
        <div class="snap">
          <button class="ico" aria-label="正交">${icon(14, 14, svg`<path d="M2.500 0v12.500H14M2.500 9h4v3.500" fill="none" stroke="#444"/>`)}</button>
          <button class="wide on" aria-label="对象捕捉">${icon(18, 18, svg`<path d="M3.500 3.500h12v13h-12z" fill="none" stroke="#555" stroke-width="1.200"/><path d="M0 0h6v6H0z" fill="#e08a3c"/>`)}${dd()}</button>
          <button class="ico" aria-label="交点">${icon(16, 16, svg`<path d="M1 1l14 14M15 1L1 15" stroke="#444" fill="none"/><path d="M6 8h4M8 6v4" stroke="#444"/>`)}</button>
          <button class="wide" aria-label="角度">${icon(16, 14, svg`<path d="M14 1L2 12.500h13M8 7v5" fill="none" stroke="#444"/>`)}${dd()}</button>
          <button class="wide" aria-label="偏移">${icon(16, 14, svg`<path d="M4 0v7M.5 3.500h7" stroke="#444"/><path d="M7 8h9v4H7z" fill="#444"/>`)}${dd()}</button>
          <button>跨图层选择</button><button>折线选择</button>
        </div>
        <span>按鼠标左键指定第一个角点，或拾取构件图元</span>
      </footer>
      <footer class="task">
        <div class="sys">
          <button aria-label="Cortana">${icon(16, 16, svg`<circle cx="8" cy="8" r="6.500" fill="none" stroke="#fff" stroke-width="2"/>`)}</button>
          <button aria-label="任务视图">${icon(18, 16, svg`<path d="M1 1v2.500h10V1M1 15v-2.500h10V15M1.500 6h9v4h-9zM15 1v14M13.500 5h3" fill="none" stroke="#fff" stroke-width="1.200"/>`)}</button>
          <button aria-label="助手">${icon(22, 22, svg`<g fill="#fff" stroke="#1f3842" stroke-width="1.200">${[0, 72, 144, 216, 288].map((a) => svg`<path d="M11 11Q5 8 7 3.500 10 0 14 2q4 3-3 9z" transform="rotate(${a} 11 11)"/>`)}</g>`)}</button>
        </div>
        <form class="seek" @submit=${(e: Event) => e.preventDefault()}>${icon(24, 24, svg`<path d="M18 13H7M18 13a6.500 6.500 0 1 0-1.500 4" fill="none" stroke="#2e8fe0" stroke-width="3"/><path d="M3 20Q6 7 21 4" fill="none" stroke="#2e8fe0" stroke-width="1.300"/>`)}${icon(5, 4, svg`<path d="M0 4h5L2.500 0z" fill="#888"/>`)}<input aria-label="网页搜索" value="钢筋工程量计算" /><button>搜索一下</button></form>
        <div class="apps">${apps.map((a) => html`<button class=${a.cls} aria-label=${a.name}>${icon(24, 24, a.body)}</button>`)}</div>
        <span class="grow"></span>
        <div class="temp"><span>62℃</span><span>CPU温度</span></div>
        <div class="tray">
          ${icon(12, 8, svg`<path d="M1 7l5-5 5 5" fill="none" stroke="#fff" stroke-width="1.300"/>`)}
          ${icon(17, 14, svg`<path d="M4.500 4.500h11v7h-11z" fill="none" stroke="#fff"/><path d="M6 6h8v4H6z" fill="#fff"/><path d="M1 1v3h4V1M3 4v4" stroke="#fff" fill="none"/>`)}
          ${icon(15, 14, svg`<g fill="none" stroke="#fff"><path d="M2 13A12 12 0 0 1 14 1M5 13a9 9 0 0 1 9-8.500M8 13a6 6 0 0 1 6-5"/></g><circle cx="12.500" cy="12" r="1.500" fill="#fff"/>`)}
          ${icon(17, 14, svg`<path d="M1 5h3l4-4v12L4 9H1z" fill="none" stroke="#fff"/><path d="M10 5q1.500 2 0 4M12 3q3 4 0 8M14 1q4.500 6 0 12" fill="none" stroke="#fff"/>`)}
          ${icon(20, 16, svg`<rect x="3" y="0" width="15" height="15" rx="3" fill="#22a84a"/><path d="M14 4H9q-2 0-2 1.800T9 7.500h3q2 0 2 1.800T12 11H7" fill="none" stroke="#fff" stroke-width="2"/>`)}
        </div>
        <div class="clock"><span>11:27</span><span>2020/11/23</span></div>
      </footer>`;
  }

  render() {
    return html`
      ${this.renderTop()}
      <main class="work">${this.renderPanels()}</main>
      ${this.renderBottom()}
      ${this.renderCalc()} ${this.renderChoose()}
      <button class="upload"><span class="mark">${icon(20, 17, svg`<g fill="none" stroke="#fff" stroke-width="2.500"><circle cx="10" cy="5" r="3.500"/><circle cx="5" cy="11" r="3.500"/><circle cx="15" cy="11" r="3.500"/></g>`)}</span><span class="lab">拖拽上传</span></button>`;
  }
}
